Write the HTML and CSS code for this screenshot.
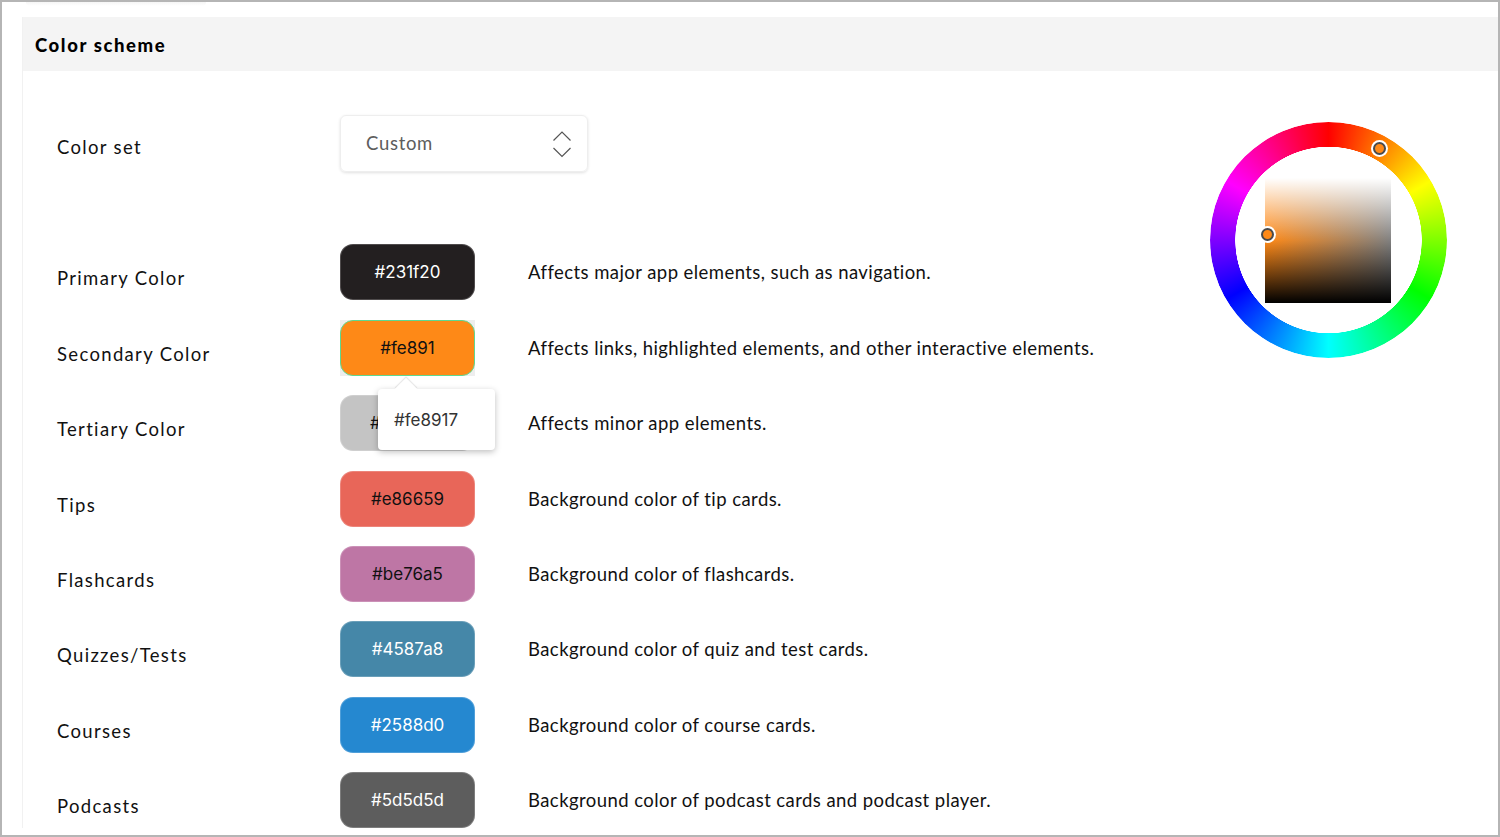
FILE: index.html
```html
<!DOCTYPE html>
<html lang="en">
<head>
  <title>Color scheme</title>
  <meta charset="utf-8" />
  <link rel="stylesheet" href="styles.css">
</head>
<body>
  <div class="frame">
    <div class="top-shadow"></div>
    <div class="panel">
      <h2 class="panel-title">Color scheme</h2>
      <div class="panel-body">
        <div class="settings">
          <div class="set-row">
            <div class="set-label">Color set</div>
            <div class="select">
              <span>Custom</span>
              <svg class="select-arrows" width="20" height="28" viewBox="0 0 20 28">
                <path d="M1.5 10.5 L10 2 L18.5 10.5 M1.5 18 L10 26.5 L18.5 18" fill="none" stroke="#555" stroke-width="1.2"/>
              </svg>
            </div>
          </div>

          <div class="colors">
            <div class="color-row">
              <div class="color-label">Primary Color</div>
              <div class="swatch-cell"><div class="swatch swatch-primary">#231f20</div></div>
              <div class="color-desc">Affects major app elements, such as navigation.</div>
            </div>
            <div class="color-row">
              <div class="color-label">Secondary Color</div>
              <div class="swatch-cell">
                <div class="swatch-focus"><div class="swatch swatch-secondary">#fe891</div></div>
                <div class="tooltip">#fe8917</div>
              </div>
              <div class="color-desc">Affects links, highlighted elements, and other interactive elements.</div>
            </div>
            <div class="color-row">
              <div class="color-label">Tertiary Color</div>
              <div class="swatch-cell"><div class="swatch swatch-tertiary"><span class="swatch-hash">#</span></div></div>
              <div class="color-desc">Affects minor app elements.</div>
            </div>
            <div class="color-row">
              <div class="color-label">Tips</div>
              <div class="swatch-cell"><div class="swatch swatch-tips">#e86659</div></div>
              <div class="color-desc">Background color of tip cards.</div>
            </div>
            <div class="color-row">
              <div class="color-label">Flashcards</div>
              <div class="swatch-cell"><div class="swatch swatch-flash">#be76a5</div></div>
              <div class="color-desc">Background color of flashcards.</div>
            </div>
            <div class="color-row">
              <div class="color-label">Quizzes/Tests</div>
              <div class="swatch-cell"><div class="swatch swatch-quiz">#4587a8</div></div>
              <div class="color-desc">Background color of quiz and test cards.</div>
            </div>
            <div class="color-row">
              <div class="color-label">Courses</div>
              <div class="swatch-cell"><div class="swatch swatch-course">#2588d0</div></div>
              <div class="color-desc">Background color of course cards.</div>
            </div>
            <div class="color-row">
              <div class="color-label">Podcasts</div>
              <div class="swatch-cell"><div class="swatch swatch-podcast">#5d5d5d</div></div>
              <div class="color-desc">Background color of podcast cards and podcast player.</div>
            </div>
          </div>
        </div>

        <div class="picker">
          <div class="wheel-ring"></div>
          <div class="wheel-square"></div>
          <div class="marker marker-hue"></div>
          <div class="marker marker-shade"></div>
        </div>
      </div>
    </div>
  </div>
</body>
</html>
```

FILE: styles.css
```css
html, body{
  margin: 0;
  height: 100%;
}
body{
  background-color: #fff;
  color: #111;
  font-family: "Lato", "Liberation Sans", sans-serif;
  font-size: 18.5px;
}
.frame{
  box-sizing: border-box;
  height: 837px;
  border: 2px solid #b5b5b5;
  overflow: hidden;
}
.top-shadow{
  width: 180px;
  height: 4px;
  margin: 0 0 11px 24px;
  border-radius: 0 0 40px 40px;
  background: linear-gradient(#f5f5f5, #fff);
}
.panel{
  margin-left: 20px;
  border-left: 1px solid #f1f1f1;
}
.panel-title{
  margin: 0;
  padding-left: 12px;
  height: 54px;
  line-height: 56px;
  background-color: #f4f4f4;
  color: #000;
  font-size: 18.5px;
  font-weight: 900;
  letter-spacing: 1.6px;
}
.panel-body{
  display: flex;
  padding: 44px 51px 0 34px;
}
.settings{
  flex: 1;
}
.picker{
  position: relative;
  flex: none;
  width: 237px;
  height: 236px;
  margin-top: 7px;
}
.wheel-ring{
  width: 100%;
  height: 100%;
  border-radius: 50%;
  background: conic-gradient(#f00, #ff0, #0f0, #0ff, #00f, #f0f, #f00);
  -webkit-mask: radial-gradient(circle closest-side, transparent 93px, #000 93.5px);
  mask: radial-gradient(circle closest-side, transparent 93px, #000 93.5px);
}
.wheel-square{
  position: absolute;
  left: 55px;
  top: 56px;
  width: 126px;
  height: 125px;
  background:
    linear-gradient(to bottom, #fff 0%, rgba(255,255,255,0) 50%, rgba(0,0,0,0) 50%, #000 100%),
    linear-gradient(to right, #fe8917, #808080);
}
.marker{
  position: absolute;
  box-sizing: border-box;
  width: 13px;
  height: 13px;
  border: 2px solid #4a4a4a;
  border-radius: 50%;
  background-color: #fe8917;
  box-shadow: 0 0 0 2px #fff;
}
.marker-hue{
  left: 163px;
  top: 20px;
}
.marker-shade{
  left: 51px;
  top: 106px;
}
.set-row{
  display: flex;
  height: 57px;
}
.set-label{
  width: 283px;
  padding-top: 21px;
  letter-spacing: 1.33px;
}
.select{
  box-sizing: border-box;
  display: flex;
  align-items: center;
  justify-content: space-between;
  width: 248px;
  height: 57px;
  padding: 0 15px 0 25px;
  border: 1px solid #eee;
  border-radius: 6px;
  box-shadow: 0 1px 3px rgba(0,0,0,0.12);
  color: #5d5d5d;
  letter-spacing: 0.7px;
}
.select span{
  margin-top: -1px;
}
.colors{
  display: flex;
  flex-direction: column;
  gap: 19.4px;
  margin-top: 72.4px;
}
.color-row{
  display: flex;
  height: 56px;
}
.color-label{
  width: 283px;
  padding-top: 23px;
  letter-spacing: 1.33px;
}
.swatch-cell{
  position: relative;
  width: 135px;
}
.swatch{
  box-sizing: border-box;
  display: flex;
  align-items: center;
  justify-content: center;
  height: 56px;
  border: 1px solid rgba(255,255,255,0.2);
  border-radius: 13px;
  font-family: "Inter", "Liberation Sans", sans-serif;
  font-size: 17px;
}
.swatch-primary{ background-color: #231f20; color: #fff; }
.swatch-secondary{ background-color: #fe8917; color: #111; border-color: #5fd890; }
.swatch-tertiary{ background-color: #c4c4c4; color: #111; justify-content: flex-start; }
.swatch-tips{ background-color: #e86659; color: #111; }
.swatch-flash{ background-color: #be76a5; color: #111; }
.swatch-quiz{ background-color: #4587a8; color: #fff; }
.swatch-course{ background-color: #2588d0; color: #fff; }
.swatch-podcast{ background-color: #5d5d5d; color: #fff; }
.swatch-hash{
  margin-left: 29px;
}
.swatch-focus{
  background-color: #eee;
}
.tooltip{
  position: absolute;
  left: 38px;
  top: 69px;
  z-index: 2;
  box-sizing: border-box;
  width: 117px;
  height: 61px;
  padding: 21px 0 0 16px;
  border-radius: 4px;
  background-color: #fff;
  box-shadow: 0 2px 6px rgba(0,0,0,0.25);
  color: #333;
  font-family: "Inter", "Liberation Sans", sans-serif;
  font-size: 17px;
  line-height: 20px;
}
.tooltip::before{
  content: "";
  position: absolute;
  left: 20px;
  top: -8px;
  width: 16px;
  height: 16px;
  background-color: #fff;
  box-shadow: -1px -1px 1px rgba(0,0,0,0.1);
  transform: rotate(45deg);
}
.color-desc{
  margin-left: 53px;
  padding-top: 17px;
  line-height: 22px;
  letter-spacing: 0.43px;
}
```
